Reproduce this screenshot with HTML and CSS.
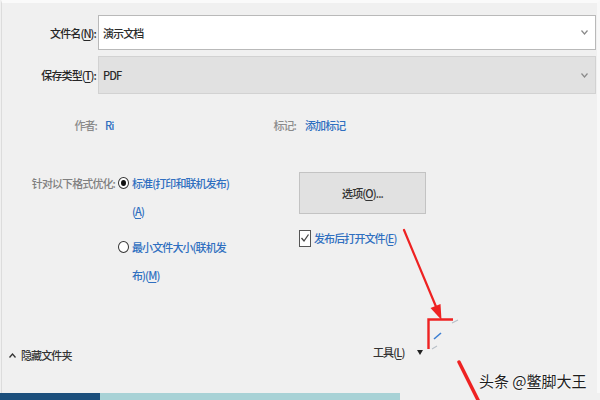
FILE: index.html
```html
<!DOCTYPE html>
<html lang="zh-CN">
<head>
    <meta charset="UTF-8" />
    <title>另存为 PDF</title>
    <link rel="stylesheet" href="styles.css">
</head>
<body>
    <div class="dialog">
        <div class="field-row">
            <span class="field-label">文件名(<u>N</u>):</span>
            <div class="combo combo-edit">
                <span class="combo-text">演示文档</span>
                <svg class="chevron" width="7" height="5" viewBox="0 0 7 5"><path d="M0.5 0.5 L3.5 4 L6.5 0.5" /></svg>
            </div>
        </div>

        <div class="field-row">
            <span class="field-label">保存类型(<u>T</u>):</span>
            <div class="combo combo-select">
                <span class="combo-text">PDF</span>
                <svg class="chevron" width="7" height="5" viewBox="0 0 7 5"><path d="M0.5 0.5 L3.5 4 L6.5 0.5" /></svg>
            </div>
        </div>

        <div class="meta-row">
            <span class="meta-label">作者:</span>
            <span class="link meta-value">Ri</span>
            <span class="meta-label">标记:</span>
            <span class="link meta-value">添加标记</span>
        </div>

        <div class="optimize">
            <span class="opt-label">针对以下格式优化:</span>

            <div class="radio-group">
                <div class="radio-item">
                    <span class="radio checked"></span>
                    <span class="link">标准(打印和联机发布)<br>(<u>A</u>)</span>
                </div>
                <div class="radio-item">
                    <span class="radio"></span>
                    <span class="link">最小文件大小(联机发<br>布)(<u>M</u>)</span>
                </div>
            </div>

            <div class="options-col">
                <button class="btn">选项(<u>O</u>)...</button>
                <div class="check-item">
                    <span class="checkbox">
                        <svg width="10" height="10" viewBox="0 0 10 10"><path d="M1.5 5 L4 8 L8.5 1.5" /></svg>
                    </span>
                    <span class="link">发布后打开文件(<u>E</u>)</span>
                </div>
            </div>
        </div>

        <div class="footer-row">
            <span class="toggle">
                <svg class="caret" width="7" height="5" viewBox="0 0 7 5"><path d="M0.5 4.5 L3.5 1 L6.5 4.5" /></svg>
                <span>隐藏文件夹</span>
            </span>
            <span class="tools">
                <span>工具(<u>L</u>)</span>
                <svg class="tri" width="6" height="5" viewBox="0 0 6 5"><path d="M0 0 H6 L3 5 Z" /></svg>
            </span>
        </div>
    </div>

    <div class="progress"></div>

    <!-- red annotation arrows drawn over the dialog -->
    <svg class="annotations" width="600" height="400" viewBox="0 0 600 400">
        <path class="arrow-shaft" d="M404 230 L437 309" />
        <path class="arrow-head" d="M441.5 320 L430.5 308 L440.5 304 Z" />
        <path class="bracket" d="M453 319.5 H428.5 V349" />
        <path class="blue-tick" d="M434 339 L441 333" />
        <path class="gray-tick" d="M452 323 L458 320 M432 349 L437 346" />
        <path class="arrow-shaft2" d="M459 362 L479 402" />
    </svg>

    <div class="watermark">头条 @鳖脚大王</div>
</body>
</html>
```

FILE: styles.css
```css
* {
    box-sizing: border-box;
}

html,
body {
    margin: 0;
}

body {
    position: relative;
    width: 600px;
    height: 400px;
    overflow: hidden;
    display: flex;
    flex-direction: column;
    background-color: #f0f0f0;
    font-family: "Noto Sans CJK SC", "Noto Sans", sans-serif;
    font-size: 11px;
    font-weight: 500;
    letter-spacing: -0.9px;
    color: #2b2b2b;
}

u {
    text-decoration-thickness: 1px;
    text-underline-offset: 2px;
}

.dialog {
    flex: 1;
    display: flex;
    flex-direction: column;
    margin-left: 1px;
    border-left: 1px solid #dcdcdc;
    border-top: 3px solid #fafafa;
    border-right: 3px solid #f8f8f8;
    padding: 12px 1px 0 0;
}

/* file name / type rows */
.field-row {
    display: grid;
    grid-template-columns: 96px 1fr;
    align-items: center;
    margin-bottom: 6px;
}

.field-label {
    text-align: right;
    padding-right: 2px;
    color: #262626;
}

.combo {
    display: flex;
    align-items: center;
    justify-content: space-between;
    padding: 0 7px 0 4px;
    border: 1px solid #b9b9b9;
}

.combo-edit {
    height: 35px;
    background-color: #fff;
}

.combo-select {
    height: 38px;
    background-color: #e1e1e1;
    border-color: #d2d2d2;
}

.chevron {
    fill: none;
    stroke: #8a8a8a;
    stroke-width: 1.2;
}

.link {
    color: #2f6fc0;
}

/* author / tags */
.meta-row {
    display: grid;
    grid-template-columns: 96px 170px 29px auto;
    height: 20px;
    line-height: 20px;
    margin-top: 15px;
}

.meta-label {
    text-align: right;
    padding-right: 1px;
    color: #8a8a8a;
}

.meta-row .meta-value:nth-child(2) {
    padding-left: 7px;
}

.meta-row .meta-value:nth-child(4) {
    padding-left: 8px;
}

/* optimise for */
.optimize {
    display: grid;
    grid-template-columns: 114px 183px 127px;
    align-items: start;
    margin-top: 37px;
}

.opt-label {
    margin-top: -3px;
    line-height: 28px;
    text-align: right;
    padding-right: 1px;
    color: #808080;
}

.radio-group {
    margin-top: -3px;
    padding-left: 2px;
    line-height: 28px;
}

.radio-item {
    display: flex;
    align-items: flex-start;
    gap: 3px;
}

.radio-item + .radio-item {
    margin-top: 8px;
}

.radio {
    flex: none;
    width: 11px;
    height: 12px;
    margin-top: 8px;
    border: 1px solid #333;
    border-radius: 50%;
    background-color: #fff;
    display: flex;
    align-items: center;
    justify-content: center;
}

.radio.checked::after {
    content: "";
    width: 5px;
    height: 6px;
    border-radius: 50%;
    background-color: #111;
}

.btn {
    display: block;
    width: 127px;
    height: 42px;
    padding: 0;
    border: 1px solid #c3c3c3;
    background-color: #e1e1e1;
    color: #333;
    font: inherit;
    letter-spacing: inherit;
}

.check-item {
    display: flex;
    align-items: center;
    gap: 3px;
    height: 20px;
    margin-top: 14px;
}

.checkbox {
    width: 12px;
    height: 17px;
    border: 1px solid #555;
    background-color: #fff;
    display: flex;
    align-items: center;
    justify-content: center;
}

.checkbox svg {
    fill: none;
    stroke: #444;
    stroke-width: 1.3;
}

/* bottom row */
.footer-row {
    display: grid;
    grid-template-columns: 371px auto;
    align-items: center;
    height: 20px;
    margin-top: auto;
    margin-bottom: 28px;
    color: #333;
}

.toggle {
    display: flex;
    align-items: center;
    gap: 5px;
    padding-left: 7px;
}

.caret {
    fill: none;
    stroke: #333;
    stroke-width: 1.3;
}

.tools {
    display: flex;
    align-items: center;
    gap: 12px;
    margin-top: -6px;
}

.tri {
    fill: #222;
}

.progress {
    height: 7px;
    background: linear-gradient(to right, #1c4f7c 0 100px, #a8d2d6 100px 400px, #f0f0f0 400px);
}

/* overlays */
.annotations {
    position: absolute;
    top: 0;
    left: 0;
    pointer-events: none;
}

.arrow-shaft,
.arrow-shaft2,
.bracket {
    fill: none;
    stroke: #ee2222;
    stroke-linecap: round;
}

.arrow-shaft {
    stroke-width: 2.2;
}

.arrow-shaft2 {
    stroke-width: 3.5;
}

.bracket {
    stroke-width: 2.4;
    stroke-linecap: butt;
}

.arrow-head {
    fill: #ee2222;
}

.blue-tick {
    stroke: #3c7fd2;
    stroke-width: 1.6;
}

.gray-tick {
    stroke: #b8c0c8;
    stroke-width: 1.2;
}

.watermark {
    position: absolute;
    top: 370px;
    left: 479px;
    font-size: 15px;
    font-weight: 400;
    line-height: 22px;
    letter-spacing: 0;
    color: #1e1e1e;
    text-shadow: 0 0 2px #fff, 0 0 2px #fff;
}
```
